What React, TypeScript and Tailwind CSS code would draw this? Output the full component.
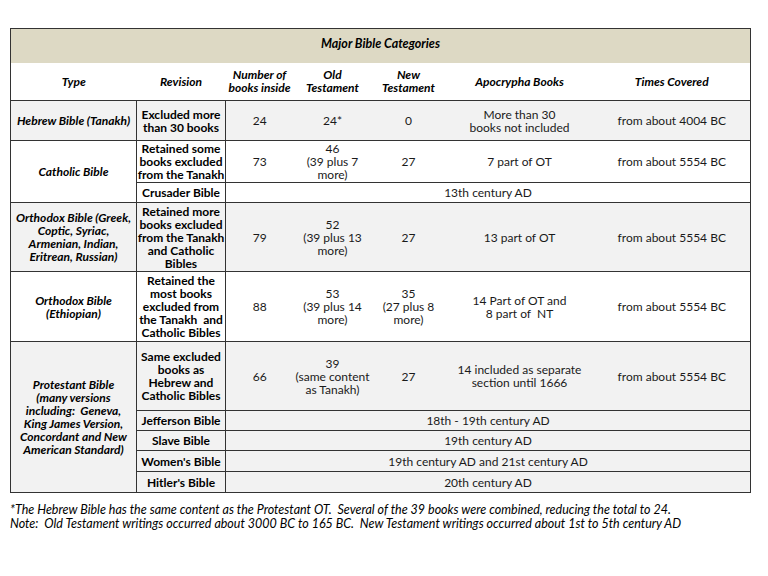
const rowLine = "border-b border-[#333]";
const sideLine = "border-r border-[#333]";

const App = () => {
  return (
    <div className="w-[768px] h-[576px] bg-white text-[#1a1a1a] font-['Lato',sans-serif] text-[12px] leading-[13px] pt-[28px] pl-[10px]">
      <table className="table-fixed border-collapse w-[740px] border border-[#333]">
        <colgroup>
          <col className="w-[126px]" />
          <col className="w-[89px]" />
          <col className="w-[68px]" />
          <col className="w-[78px]" />
          <col className="w-[74px]" />
          <col className="w-[148px]" />
          <col className="w-[157px]" />
        </colgroup>
        <tbody>
          <tr className="h-[34px] bg-[#ddd9c4]">
            <td colSpan={7} className="text-center font-bold italic text-[12.5px] text-black pb-[5px]">Major Bible Categories</td>
          </tr>
          <tr className={`h-[38px] bg-white text-center font-bold italic text-black leading-[13px] ${rowLine}`}>
            <td>Type</td>
            <td>Revision</td>
            <td>Number of<br />books inside</td>
            <td>Old<br />Testament</td>
            <td>New<br />Testament</td>
            <td>Apocrypha Books</td>
            <td>Times Covered</td>
          </tr>

          <tr className={`h-[40px] bg-[#f2f2f2] text-center ${rowLine}`}>
            <td className={`${sideLine} font-bold italic whitespace-nowrap text-black`}>Hebrew Bible (Tanakh)</td>
            <td className={`${sideLine} font-bold text-black`}>Excluded more than 30 books</td>
            <td>24</td>
            <td>24*</td>
            <td>0</td>
            <td>More than 30<br />books not included</td>
            <td>from about 4004 BC</td>
          </tr>

          <tr className={`h-[42px] bg-white text-center ${rowLine}`}>
            <td rowSpan={2} className={`${sideLine} font-bold italic text-black`}>Catholic Bible</td>
            <td className={`${sideLine} font-bold text-black`}>Retained some books excluded from the Tanakh</td>
            <td>73</td>
            <td>46<br />(39 plus 7<br />more)</td>
            <td>27</td>
            <td>7 part of OT</td>
            <td>from about 5554 BC</td>
          </tr>
          <tr className={`h-[20px] bg-white text-center ${rowLine}`}>
            <td className={`${sideLine} font-bold text-black`}>Crusader Bible</td>
            <td colSpan={5}>13th century AD</td>
          </tr>

          <tr className={`h-[69px] bg-[#f2f2f2] text-center ${rowLine}`}>
            <td className={`${sideLine} font-bold italic text-black`}>Orthodox Bible (Greek,<br />Coptic, Syriac,<br />Armenian, Indian,<br />Eritrean, Russian)</td>
            <td className={`${sideLine} font-bold text-black`}>Retained more books excluded from the Tanakh and Catholic Bibles</td>
            <td>79</td>
            <td>52<br />(39 plus 13<br />more)</td>
            <td>27</td>
            <td>13 part of OT</td>
            <td>from about 5554 BC</td>
          </tr>

          <tr className={`h-[70px] bg-white text-center ${rowLine}`}>
            <td className={`${sideLine} font-bold italic text-black`}>Orthodox Bible<br />(Ethiopian)</td>
            <td className={`${sideLine} font-bold text-black`}>Retained the<br />most books<br />excluded from<br />the Tanakh&nbsp; and<br />Catholic Bibles</td>
            <td>88</td>
            <td>53<br />(39 plus 14<br />more)</td>
            <td>35<br />(27 plus 8<br />more)</td>
            <td>14 Part of OT and<br />8 part of&nbsp; NT</td>
            <td>from about 5554 BC</td>
          </tr>

          <tr className={`h-[69px] bg-[#f2f2f2] text-center ${rowLine}`}>
            <td rowSpan={5} className={`${sideLine} font-bold italic text-black`}>Protestant Bible<br />(many versions<br />including:&nbsp; Geneva,<br />King James Version,<br />Concordant and New<br />American Standard)</td>
            <td className={`${sideLine} font-bold text-black`}>Same excluded books as Hebrew and Catholic Bibles</td>
            <td>66</td>
            <td>39<br />(same content<br />as Tanakh)</td>
            <td>27</td>
            <td>14 included as separate<br />section until 1666</td>
            <td>from about 5554 BC</td>
          </tr>
          <tr className={`h-[20px] bg-[#f2f2f2] text-center ${rowLine}`}>
            <td className={`${sideLine} font-bold text-black`}>Jefferson Bible</td>
            <td colSpan={5}>18th - 19th century AD</td>
          </tr>
          <tr className={`h-[20px] bg-[#f2f2f2] text-center ${rowLine}`}>
            <td className={`${sideLine} font-bold text-black`}>Slave Bible</td>
            <td colSpan={5}>19th century AD</td>
          </tr>
          <tr className={`h-[21px] bg-[#f2f2f2] text-center ${rowLine}`}>
            <td className={`${sideLine} font-bold text-black`}>Women's Bible</td>
            <td colSpan={5}>19th century AD and 21st century AD</td>
          </tr>
          <tr className="h-[21px] bg-[#f2f2f2] text-center">
            <td className={`${sideLine} font-bold text-black`}>Hitler's Bible</td>
            <td colSpan={5}>20th century AD</td>
          </tr>
        </tbody>
      </table>

      <div className="mt-[10px] italic text-[12.5px] leading-[14px] text-black">
        <p>*The Hebrew Bible has the same content as the Protestant OT.&nbsp; Several of the 39 books were combined, reducing the total to 24.</p>
        <p>Note:&nbsp; Old Testament writings occurred about 3000 BC to 165 BC.&nbsp; New Testament writings occurred about 1st to 5th century AD</p>
      </div>
    </div>
  );
};

export default App;
